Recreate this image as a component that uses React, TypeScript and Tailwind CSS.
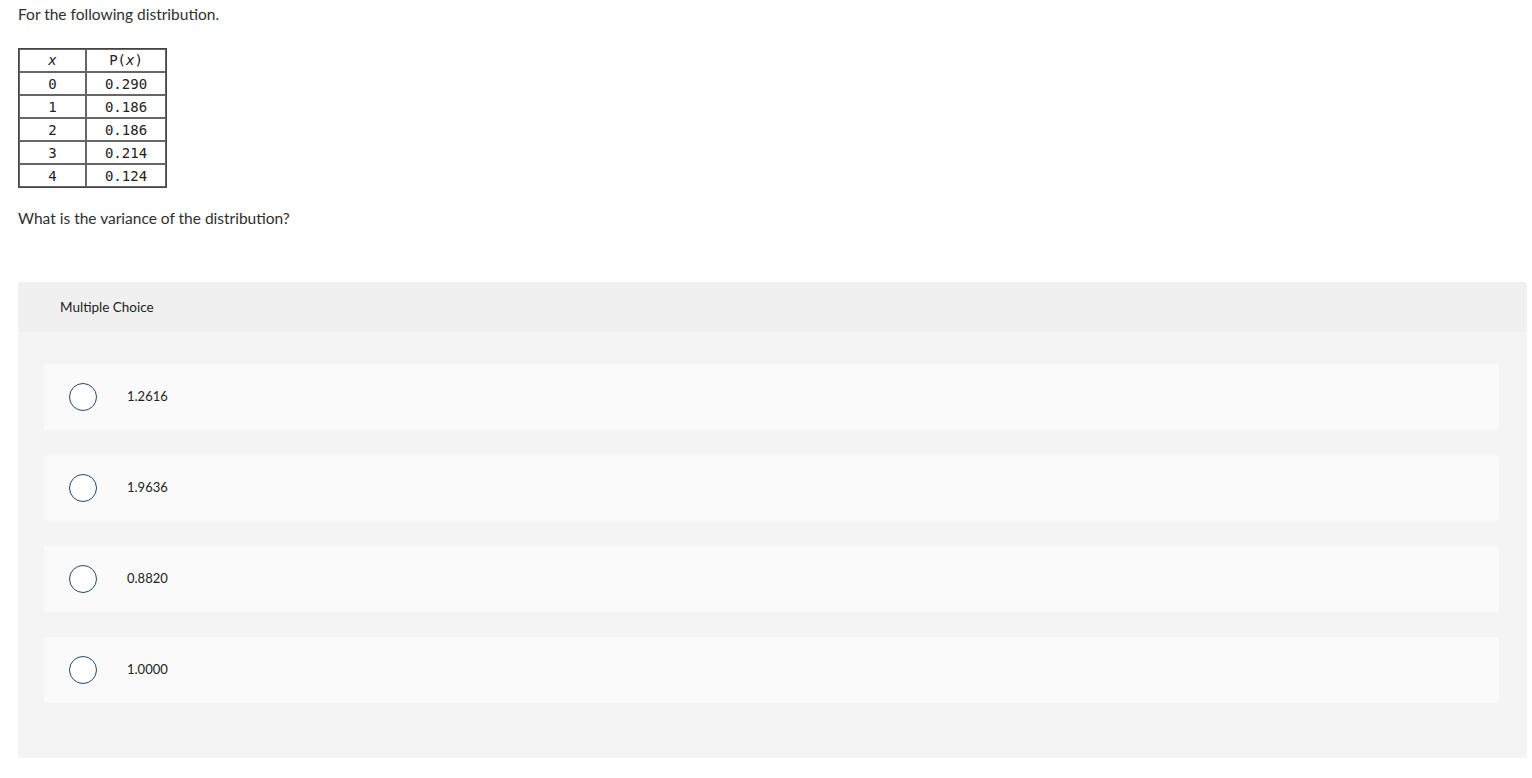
const rows = [
  ["0", "0.290"],
  ["1", "0.186"],
  ["2", "0.186"],
  ["3", "0.214"],
  ["4", "0.124"],
];

const choices = ["1.2616", "1.9636", "0.8820", "1.0000"];

export default function App() {
  return (
    <div className="min-h-screen bg-white text-[#2f2f2f] font-['Lato','Liberation_Sans',sans-serif] px-[18px] pt-[4px]">
      <p className="text-[15.5px] leading-[20px]">For the following distribution.</p>

      {/* distribution table */}
      <table className="mt-[24px] border-separate border-spacing-0 border border-[#444] font-['DejaVu_Sans_Mono',monospace] text-[14px] text-[#222]">
        <thead>
          <tr>
            <th className="w-[67px] h-[23px] border border-[#666] font-normal italic">x</th>
            <th className="w-[80px] h-[23px] border border-[#666] font-normal">
              P(<span className="italic">x</span>)
            </th>
          </tr>
        </thead>
        <tbody>
          {rows.map(([x, p]) => (
            <tr key={x}>
              <td className="h-[23px] border border-[#666] text-center leading-none">{x}</td>
              <td className="h-[23px] border border-[#666] text-center leading-none">{p}</td>
            </tr>
          ))}
        </tbody>
      </table>

      <p className="mt-[20px] text-[15.5px] leading-[20px]">What is the variance of the distribution?</p>

      {/* answer panel */}
      <div className="mt-[54px] w-[1509px] rounded-[3px] bg-[#f4f4f4] pb-[55px]">
        <div className="h-[50px] flex items-center px-[42px] bg-[#f0f0f0] rounded-t-[3px] text-[13.5px] text-[#222]">
          Multiple Choice
        </div>
        <div className="flex flex-col gap-[25px] pl-[26px] pr-[28px] pt-[32px]">
          {choices.map(c => (
            <label
              key={c}
              className="h-[66px] flex items-center rounded-[4px] bg-[#fafafa] pl-[25px] cursor-pointer"
            >
              <span className="w-[28px] h-[28px] rounded-full border-[1.5px] border-[#1b4a7a] bg-white shrink-0" />
              <span className="ml-[30px] text-[13px] text-[#222]">{c}</span>
            </label>
          ))}
        </div>
      </div>
    </div>
  );
}
